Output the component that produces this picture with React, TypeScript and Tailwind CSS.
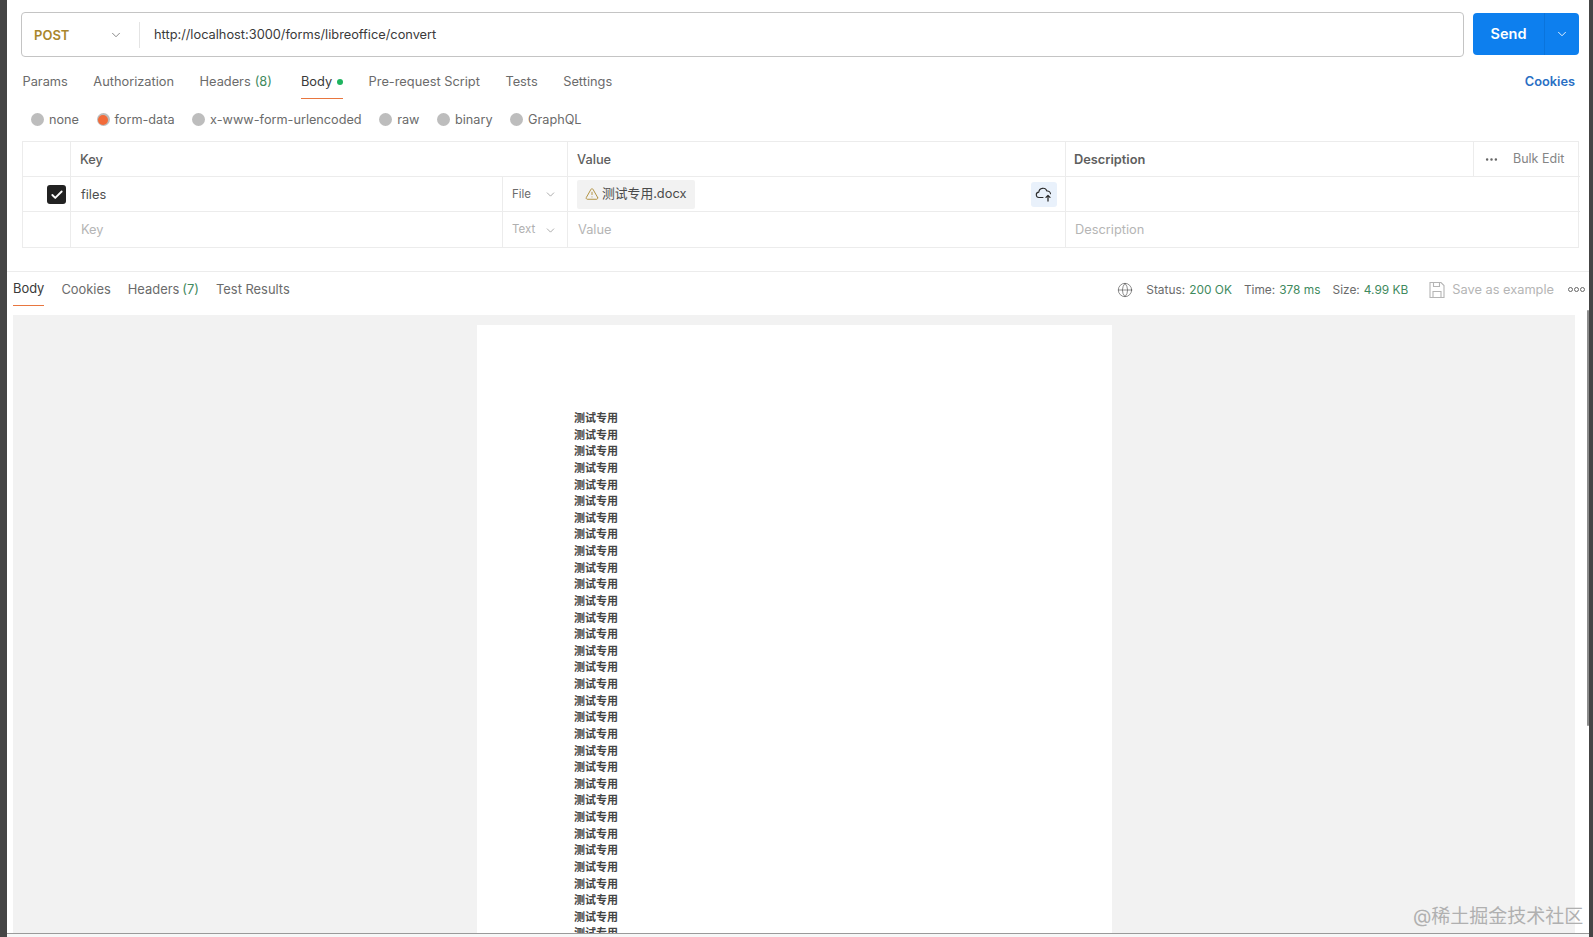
import { Check, ChevronDown, Ellipsis, Globe, TriangleAlert } from "lucide-react";

const requestTabs = [
  { label: "Params" },
  { label: "Authorization" },
  { label: "Headers", count: "(8)" },
  { label: "Body", active: true, dot: true },
  { label: "Pre-request Script" },
  { label: "Tests" },
  { label: "Settings" },
];

const bodyTypes = [
  { label: "none" },
  { label: "form-data", active: true },
  { label: "x-www-form-urlencoded" },
  { label: "raw" },
  { label: "binary" },
  { label: "GraphQL" },
];

const previewLines = Array.from({ length: 32 }, (_, i) => i);

function CloudUpload() {
  return (
    <svg width="18" height="18" viewBox="0 0 18 18" fill="none" stroke="#2b2b2b" strokeWidth="1.1" strokeLinecap="round" strokeLinejoin="round">
      <path d="M8 12.5H4.2a2.7 2.7 0 0 1-.4-5.4A4.2 4.2 0 0 1 11.9 6a3 3 0 0 1 3.6 2.8" />
      <path d="M13 16V10.6M11 12.4l2-2 2 2" strokeWidth="1.3" />
    </svg>
  );
}

function SaveIcon() {
  return (
    <svg width="16" height="18" viewBox="0 0 16 18" fill="none" stroke="#b5b5b5" strokeWidth="1.1">
      <path d="M1 1.5h11l3 3v12H1z" />
      <path d="M4.5 1.5v4h6v-4M4 16.5v-6h8v6" />
    </svg>
  );
}

export default function App() {
  return (
    <div className="flex h-[937px] w-[1593px] overflow-hidden bg-white text-[12.8px] text-[#6b6b6b] [font-family:Inter,'Noto_Sans_CJK_SC',sans-serif]">
      <div className="w-[7px] shrink-0 bg-[#454545]" />

      <div className="relative flex w-[1582px] flex-col">
        {/* Request */}
        <div className="pl-[14px] pt-[12px]">
          <div className="flex h-[45px] items-stretch">
            <div className="flex w-[1443px] items-center rounded-[4px] border border-[#c4c4c4]">
              <span className="ml-[12px] mt-[2px] w-[75px] text-[13px] font-semibold text-[#a9862c]">POST</span>
              <ChevronDown size={14} strokeWidth={1.4} className="text-[#707070]" />
              <div className="ml-[16px] h-[26px] w-px bg-[#e4e4e4]" />
              <span className="ml-[14px] mt-[1px] text-[#3a3a3a]">http://localhost:3000/forms/libreoffice/convert</span>
            </div>
            <div className="mb-[2px] ml-[9px] mt-[1px] flex w-[106px] rounded-[4px] bg-[#0d7fee] text-white">
              <div className="flex w-[71px] items-center justify-center text-[14.5px] font-semibold">Send</div>
              <div className="flex flex-1 items-center justify-center border-l border-[#0a74dc]">
                <ChevronDown size={14} strokeWidth={1.5} />
              </div>
            </div>
          </div>

          <div className="mt-[7px] flex h-[35px] items-stretch pr-[14px]">
            <div className="flex gap-[25.5px] pl-[1.5px]">
              {requestTabs.map((tab) => (
                <div key={tab.label} className={`flex items-center gap-[1px] border-b pt-[1px] ${tab.active ? "ml-[3.5px] border-[#e8763f] text-[#3a3a3a]" : "border-transparent"}`}>
                  <span>{tab.label}</span>
                  {tab.count && <span className="ml-[3px] text-[#3f8a5e]">{tab.count}</span>}
                  {tab.dot && <span className="ml-[4px] mt-[1px] h-[6px] w-[6px] rounded-full bg-[#1eb45f]" />}
                </div>
              ))}
            </div>
            <span className="ml-auto self-center font-semibold text-[#2a6fc4]">Cookies</span>
          </div>

          <div className="mt-[5px] flex h-[32px] items-center gap-[17.5px] pl-[10px] text-[12.7px]">
            {bodyTypes.map((type) => (
              <div key={type.label} className="flex items-center gap-[5px]">
                <span className="flex h-[13px] w-[13px] items-center justify-center rounded-full bg-[#bdbdbd]">
                  {type.active && <span className="h-[10px] w-[10px] rounded-full bg-[#f26b3a]" />}
                </span>
                <span>{type.label}</span>
              </div>
            ))}
          </div>

          {/* Form data table */}
          <div className="ml-[1px] mt-[5px] grid w-[1557px] grid-cols-[48px_432px_65px_498px_408px_106px] grid-rows-[35px_35px_35px] border border-[#ececec]">
            <div className="border-b border-r border-[#ececec]" />
            <div className="col-span-2 flex items-center border-b border-r border-[#ececec] pl-[9px] pt-[1px] font-medium text-[#5e5e5e]">Key</div>
            <div className="flex items-center border-b border-r border-[#ececec] pl-[9px] pt-[1px] font-medium text-[#5e5e5e]">Value</div>
            <div className="flex items-center border-b border-r border-[#ececec] pl-[8px] pt-[1px] font-semibold text-[#5e5e5e]">Description</div>
            <div className="flex items-center gap-[14px] border-b border-[#ececec] pl-[10px] text-[12.5px] text-[#858585]">
              <Ellipsis size={15} strokeWidth={2} className="text-[#666666]" />
              <span>Bulk Edit</span>
            </div>

            <div className="flex items-center justify-end border-b border-r border-[#ececec] pr-[4px] pt-[1px]">
              <span className="flex h-[19px] w-[19px] items-center justify-center rounded-[3px] bg-[#222222]">
                <Check size={14} strokeWidth={3.2} className="text-white" />
              </span>
            </div>
            <div className="flex items-center border-b border-r border-[#ececec] pl-[10px] pt-[1px] text-[#4e4e4e]">files</div>
            <div className="flex items-center gap-[13px] border-b border-r border-[#ececec] pl-[9px] pt-[1px] text-[11.5px] text-[#6b6b6b]">
              File
              <ChevronDown size={13} strokeWidth={1.3} className="text-[#8a8a8a]" />
            </div>
            <div className="flex items-center justify-between border-b border-r border-[#ececec] pl-[9px] pr-[8px]">
              <div className="flex h-[29px] w-[118px] items-center gap-[3px] rounded-[2px] bg-[#f2f2f2] pl-[8px] text-[#4a4a4a]">
                <TriangleAlert size={14} strokeWidth={1.5} className="text-[#a9862c]" />
                <span>测试专用.docx</span>
              </div>
              <div className="flex h-[25px] w-[26px] items-center justify-center rounded-[3px] bg-[#e9f1fb]">
                <CloudUpload />
              </div>
            </div>
            <div className="col-span-2 border-b border-[#ececec]" />

            <div className="border-r border-[#ececec]" />
            <div className="flex items-center border-r border-[#ececec] pl-[10px] text-[#b5b5b5]">Key</div>
            <div className="flex items-center gap-[9px] border-r border-[#ececec] pl-[9px] pt-[1px] text-[11.5px] text-[#b0b0b0]">
              Text
              <ChevronDown size={13} strokeWidth={1.3} className="text-[#8a8a8a]" />
            </div>
            <div className="flex items-center border-r border-[#ececec] pl-[10px] text-[#b5b5b5]">Value</div>
            <div className="col-span-2 flex items-center pl-[9px] text-[#b5b5b5]">Description</div>
          </div>
        </div>

        {/* Response */}
        <div className="mt-[23px] border-t border-[#ececec]">
          <div className="flex h-[34px] items-stretch pl-[6px] pr-[4px]">
            <div className="flex gap-[17px] text-[12.9px]">
              <div className="flex items-center border-b border-[#e8763f] pt-[1px] text-[#3a3a3a]">Body</div>
              <div className="flex items-center pt-[1px]">Cookies</div>
              <div className="flex items-center pt-[1px]">
                Headers<span className="ml-[3px] text-[#3f8a5e]">(7)</span>
              </div>
              <div className="flex items-center pt-[1px]">Test Results</div>
            </div>
            <div className="ml-auto flex items-center pt-[1px] text-[11.9px]">
              <Globe size={16} strokeWidth={1} className="text-[#555555]" />
              <span className="ml-[13px]">Status:</span>
              <span className="ml-[4px] text-[#3f8a5e]">200 OK</span>
              <span className="ml-[12px]">Time:</span>
              <span className="ml-[4px] text-[#3f8a5e]">378 ms</span>
              <span className="ml-[12px]">Size:</span>
              <span className="ml-[4px] text-[#3f8a5e]">4.99 KB</span>
              <span className="ml-[21px] flex"><SaveIcon /></span>
              <span className="ml-[7px] text-[12.8px] text-[#b5b5b5]">Save as example</span>
              <span className="ml-[14px] flex gap-[1px]">
                <span className="h-[5px] w-[5px] rounded-full border border-[#666666]" />
                <span className="h-[5px] w-[5px] rounded-full border border-[#666666]" />
                <span className="h-[5px] w-[5px] rounded-full border border-[#666666]" />
              </span>
            </div>
          </div>

          <div className="ml-[6px] mr-[14px] mt-[9px] h-[618px] overflow-hidden bg-[#f2f2f2] pt-[10px]">
            <div className="ml-[464px] h-[608px] w-[635px] overflow-hidden bg-white pl-[97px] pt-[85px] text-[11px] font-bold leading-[16.62px] text-[#444444]">
              {previewLines.map((line) => (
                <div key={line}>测试专用</div>
              ))}
            </div>
          </div>
        </div>

        {/* Scrollbar thumb */}
        <div className="absolute left-[1580px] top-[310px] h-[416px] w-[2px] rounded-full bg-[#8c8c8c]" />

        {/* Bottom edge of the captured window */}
        <div className="absolute bottom-0 left-0 right-0 h-[4px] border-t border-[#9a9a9a] bg-[#f7f7f7]" />

        {/* Watermark */}
        <div className="absolute bottom-[7px] left-[1406px] whitespace-nowrap text-[19px] leading-[26px] text-[#b0b0b0]">@稀土掘金技术社区</div>
      </div>

      <div className="w-[4px] shrink-0 bg-[#454545]" />
    </div>
  );
}
